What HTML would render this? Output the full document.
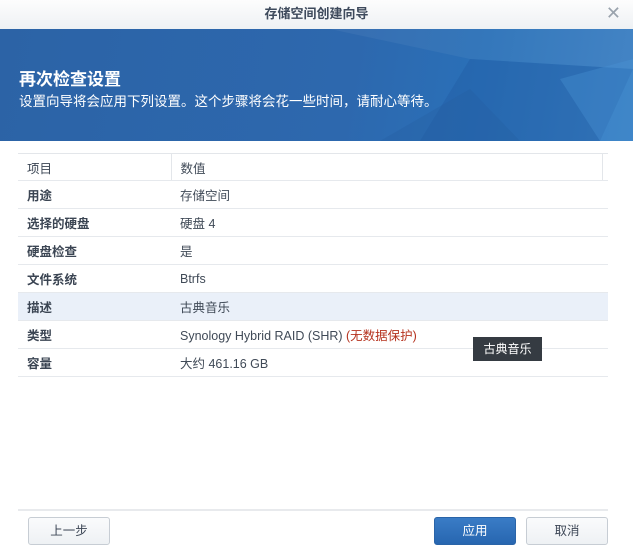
<!DOCTYPE html>
<html><head><meta charset="utf-8"><style>
*{margin:0;padding:0;box-sizing:border-box}
body{width:633px;height:550px;background:#fff;font-family:"Liberation Sans","Noto Sans CJK SC",sans-serif;font-size:13px;color:#404a57;position:relative;overflow:hidden}
.tb{position:absolute;left:0;top:0;width:633px;height:29px;background:linear-gradient(#fdfdfd,#eef1f4);text-align:center;line-height:27px;font-size:13px;font-weight:bold;color:#3e4a5c}
.x{position:absolute;right:12px;top:0;color:#9aa3ad;font-size:18px;font-weight:normal}
.ban{position:absolute;left:0;top:29px;width:633px;height:112px;background:linear-gradient(100deg,#2c63a6 0%,#2d68ae 55%,#2a70b8 75%,#3a7fc2 100%);overflow:hidden}
.ban h1{position:absolute;left:19px;top:36px;font-size:17px;color:#fff;font-weight:bold}
.ban p{position:absolute;left:19px;top:61px;font-size:13.5px;color:#fff}
table{position:absolute;left:18px;top:153px;width:590px;border-collapse:collapse}
td{height:28px;border-bottom:1px solid #e6e9ed;padding-left:9px;font-size:12.5px}
tr.h td{height:27px;border-top:1px solid #e3e6ea}
td.a{width:153px;font-weight:bold;color:#3b4553}
tr.h td.a{font-weight:normal;border-right:1px solid #e3e6ea}
tr.sel td{background:#eaf0f9}
.red{color:#b5321e}
.tip{position:absolute;left:473px;top:337px;width:69px;height:24px;background:#353b42;color:#fff;font-size:12px;line-height:24px;text-align:center}
.line{position:absolute;left:18px;top:509px;width:590px;height:2px;background:#e8eaed}
.btn{position:absolute;top:517px;height:28px;width:82px;border:1px solid #c7cdd4;border-radius:3px;background:linear-gradient(#fafbfc,#eef1f4);text-align:center;line-height:26px;font-size:12.5px;color:#3d4756}
.blue{background:linear-gradient(#3a7cc6,#2766b0);border-color:#2a64a8;color:#fff}
</style></head><body>
<div class="tb">存储空间创建向导<span class="x">✕</span></div>
<div class="ban">
<svg width="633" height="112" style="position:absolute;left:0;top:0">
<polygon points="330,0 633,0 633,40 470,30" fill="#fff" opacity=".05"/>
<polygon points="470,30 633,40 600,112 420,112" fill="#1f5aa0" opacity=".35"/>
<polygon points="560,50 633,30 633,112 600,112" fill="#4a95d6" opacity=".35"/>
<polygon points="380,112 470,60 520,112" fill="#245c9e" opacity=".3"/>
</svg>
<h1>再次检查设置</h1>
<p>设置向导将会应用下列设置。这个步骤将会花一些时间，请耐心等待。</p>
</div>
<table>
<tr class="h"><td class="a">项目</td><td style="border-right:1px solid #e3e6ea">数值</td><td style="width:6px;padding:0"></td></tr>
<tr><td class="a">用途</td><td colspan="2">存储空间</td></tr>
<tr><td class="a">选择的硬盘</td><td colspan="2">硬盘 4</td></tr>
<tr><td class="a">硬盘检查</td><td colspan="2">是</td></tr>
<tr><td class="a">文件系统</td><td colspan="2">Btrfs</td></tr>
<tr class="sel"><td class="a">描述</td><td colspan="2">古典音乐</td></tr>
<tr><td class="a">类型</td><td colspan="2">Synology Hybrid RAID (SHR) <span class="red">(无数据保护)</span></td></tr>
<tr><td class="a">容量</td><td colspan="2">大约 461.16 GB</td></tr>
</table>
<div class="tip">古典音乐</div>
<div class="line"></div>
<div class="btn" style="left:28px">上一步</div>
<div class="btn blue" style="left:434px">应用</div>
<div class="btn" style="left:526px">取消</div>
</body></html>
